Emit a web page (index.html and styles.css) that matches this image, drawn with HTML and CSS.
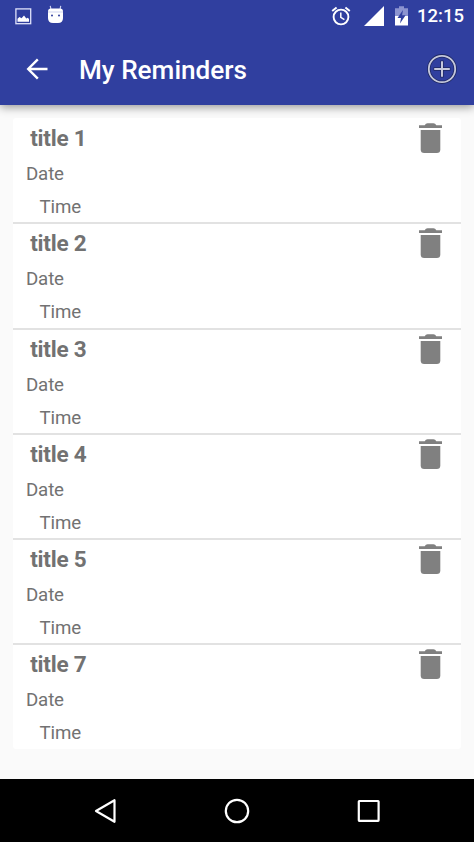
FILE: index.html
```html
<!DOCTYPE html>
<html lang="en">
<head>
<meta charset="utf-8">
<title>My Reminders</title>
<link rel="stylesheet" href="styles.css">
</head>
<body>
<svg class="defs" width="0" height="0" aria-hidden="true">
  <symbol id="trash" viewBox="0 0 24 31">
    <path d="M.5 2.3H6.2Q7.2.3 9 .3H15Q16.800.3 17.800 2.3H23.500V5H.500Z"/>
    <path d="M2.200 7H21.800V26.500Q21.800 30 18.300 30H5.700Q2.200 30 2.200 26.500Z"/>
  </symbol>
</svg>
<div class="screen">
  <header class="header">
    <div class="status">
      <div class="status-left">
        <svg width="17" height="17" viewBox="0 0 17 17"><rect x=".9" y=".9" width="14.800" height="14.800" fill="none" stroke="#dfe2fa" stroke-width="1.300"/><path d="M2.500 13.700V10.800L4.500 9L6.500 10.300L9 7.500L11.300 10.500L12.800 9.700L14 11V13.700Z" fill="#fff"/></svg>
        <svg class="droid" width="17" height="19" viewBox="0 0 17 19"><path d="M4 5L3.300.8M13 5L13.700.8" stroke="#c9cdf0" stroke-width="1.200"/><path d="M1 6.500Q1 3.500 4 3.500H13Q16 3.500 16 6.500V13Q16 18 11 18H6Q1 18 1 13Z" fill="#fff"/><path d="M1 7H16" stroke="#bcc1e8" stroke-width=".7"/><circle cx="5" cy="10.500" r="1" fill="#303f9f"/><circle cx="12" cy="10.500" r="1" fill="#303f9f"/></svg>
      </div>
      <div class="status-right">
        <svg class="alarm" width="20" height="20" viewBox="0 0 20 20" fill="none" stroke="#fff"><circle cx="10" cy="11" r="7.400" stroke-width="1.900"/><path d="M1.200 5L5.600 1.400M18.800 5L14.400 1.400" stroke-width="1.900"/><path d="M9.800 6.500V11.400L13.400 13.600" stroke-width="1.500"/></svg>
        <svg class="signal" width="20" height="20" viewBox="0 0 20 20"><path d="M0 20L20 0V20Z" fill="#fff"/></svg>
        <svg class="battery" width="13" height="20" viewBox="0 0 13 20"><path d="M0 2.200H4V.2H9V2.200H13V10H0Z" fill="#8c94d0"/><path d="M0 10H13V19.500H0Z" fill="#fff"/><path d="M8 4L2.500 12H6L5 17.500L10.600 9.300H7.100Z" fill="#303f9f"/></svg>
        <span class="clock">12:15</span>
      </div>
    </div>
    <div class="toolbar">
      <svg class="back" width="22" height="22" viewBox="0 0 22 22" fill="none" stroke="#fff" stroke-width="2.400"><path d="M21.500 11H2.500M11.800 1.300L2.200 11L11.800 20.700"/></svg>
      <h1>My Reminders</h1>
      <svg class="add" width="30" height="30" viewBox="0 0 30 30" fill="none"><circle cx="15" cy="15" r="13.200" stroke="#1e2862" stroke-width="3.400"/><path d="M15 6.500V23.500M6.500 15H23.500" stroke="#1e2862" stroke-width="3.400"/><circle cx="15" cy="15" r="13.200" stroke="#c5c8dc" stroke-width="1.800"/><path d="M15 7.200V22.800M7.200 15H22.800" stroke="#c5c8dc" stroke-width="2"/></svg>
    </div>
  </header>
  <main class="content">
    <ul class="list">
      <li class="row"><div><h2>title 1</h2><p class="date">Date</p><p class="time">Time</p></div><svg class="trash"><use href="#trash"/></svg></li>
      <li class="row"><div><h2>title 2</h2><p class="date">Date</p><p class="time">Time</p></div><svg class="trash"><use href="#trash"/></svg></li>
      <li class="row"><div><h2>title 3</h2><p class="date">Date</p><p class="time">Time</p></div><svg class="trash"><use href="#trash"/></svg></li>
      <li class="row"><div><h2>title 4</h2><p class="date">Date</p><p class="time">Time</p></div><svg class="trash"><use href="#trash"/></svg></li>
      <li class="row"><div><h2>title 5</h2><p class="date">Date</p><p class="time">Time</p></div><svg class="trash"><use href="#trash"/></svg></li>
      <li class="row"><div><h2>title 7</h2><p class="date">Date</p><p class="time">Time</p></div><svg class="trash"><use href="#trash"/></svg></li>
    </ul>
  </main>
  <nav class="navbar">
    <svg width="26" height="26" viewBox="0 0 26 26"><path d="M4 13L22.500 2.200V23.800Z"/></svg>
    <svg width="26" height="26" viewBox="0 0 26 26"><circle cx="13" cy="13" r="11.200"/></svg>
    <svg width="26" height="26" viewBox="0 0 26 26"><rect x="2.800" y="3" width="19.800" height="19.800" rx=".5"/></svg>
  </nav>
</div>
</body>
</html>
```

FILE: styles.css
```css
* { box-sizing: border-box; margin: 0; padding: 0; }
body { font-family: Roboto, "Liberation Sans", sans-serif; }
svg { display: block; flex: none; }
.defs { display: none; }
.screen { height: 842px; display: flex; flex-direction: column; background: #fafafa; overflow: hidden; }
.header {
  position: relative; z-index: 1; height: 105px; flex: none;
  background: #303f9f; color: #fff;
  box-shadow: 0 2px 9px rgba(0, 0, 0, .42);
}
.status { height: 32px; padding: 0 10px 0 15px; display: flex; justify-content: space-between; align-items: center; }
.status-left, .status-right { display: flex; align-items: center; }
.status-left { gap: 15px; }
.droid { margin-bottom: 3px; }
.signal { margin-left: 13px; }
.battery { margin-left: 11px; }
.clock { margin-left: 9px; padding-top: 1px; font-size: 18.500px; font-weight: 500; line-height: 31px; }
.toolbar { height: 73px; padding: 0 17px 0 26px; display: flex; align-items: center; }
h1 { margin-left: 31px; padding-top: 3px; font-size: 26.150px; font-weight: 500; line-height: 70px; }
.add { margin-left: auto; }
.content { flex: 1; padding: 13px 13px 0; }
.list { padding-top: 1px; list-style: none; background: #fff; border-radius: 3px; }
.row {
  height: 105.250px; padding: 4px 18px 0 13px;
  display: flex; justify-content: space-between; color: #727272;
  border-bottom: 2px solid #e2e2e2;
}
.row:last-child { height: 104px; border-bottom: 0; }
h2 { padding-left: 4.200px; font-size: 22.500px; font-weight: 700; line-height: 31px; letter-spacing: -.2px; }
p { font-size: 18.700px; line-height: 33px; letter-spacing: -.15px; }
.date { padding-top: 4px; }
.time { padding-left: 13.500px; }
.trash { width: 25px; height: 31px; fill: #808080; }
.navbar { height: 63px; flex: none; background: #000; display: flex; justify-content: space-between; padding: 0 92px; align-items: center; }
.navbar svg { fill: none; stroke: #fff; stroke-width: 2.200; stroke-linejoin: round; }
```
